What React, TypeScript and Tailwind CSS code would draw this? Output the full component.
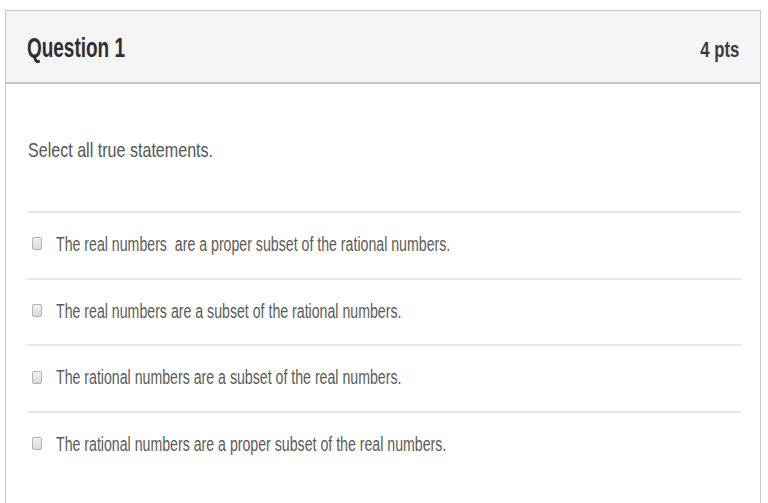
import React from "react";

const options = [
  "The real numbers  are a proper subset of the rational numbers.",
  "The real numbers are a subset of the rational numbers.",
  "The rational numbers are a subset of the real numbers.",
  "The rational numbers are a proper subset of the real numbers.",
];

function Checkbox() {
  return (
    <span className="block w-[10px] h-[13px] shrink-0 rounded-[2px] border border-[#b3b3b3] bg-gradient-to-b from-[#f2f2f2] to-[#d9d9d9]" />
  );
}

export default function App() {
  return (
    <div className="h-[503px] w-[768px] overflow-hidden bg-white font-['Liberation_Sans',Arial,sans-serif]">
      <div className="ml-[5px] mt-[10px] w-[756px] h-[520px] border border-[#c8c8c8] bg-white">
        {/* question header */}
        <div className="h-[73px] bg-[#f5f5f5] border-b-2 border-[#c6c6c6] px-[21px] pt-[24px] flex items-baseline justify-between">
          <span className="inline-block whitespace-nowrap origin-left scale-x-[0.702] text-[27px] leading-none font-bold text-[#2e2e2e]">
            Question 1
          </span>
          <span className="inline-block whitespace-nowrap origin-right scale-x-[0.76] text-[22px] leading-none font-bold text-[#3b3b3b]">
            4 pts
          </span>
        </div>

        {/* question body */}
        <div className="pt-[55px] pl-[22px] pr-[19px]">
          <p className="whitespace-nowrap text-[21px] leading-none h-[21px]">
            <span className="inline-block align-top origin-left scale-x-[0.766] text-[21px] leading-none text-[#555555]">
              Select all true statements.
            </span>
          </p>
        </div>

        <ul className="mt-[51px] ml-[21px] mr-[19px]">
          {options.map((text) => (
            <li
              key={text}
              className="h-[66.7px] border-t-2 border-[#e7e7e7] flex items-center pl-[5px]"
            >
              <span className="-mt-[3px]">
                <Checkbox />
              </span>
              <span className="ml-[14px] -mt-[1px] inline-block whitespace-pre origin-left scale-x-[0.726] text-[19.5px] leading-none text-[#5a5a5a]">
                {text}
              </span>
            </li>
          ))}
        </ul>
      </div>
    </div>
  );
}
